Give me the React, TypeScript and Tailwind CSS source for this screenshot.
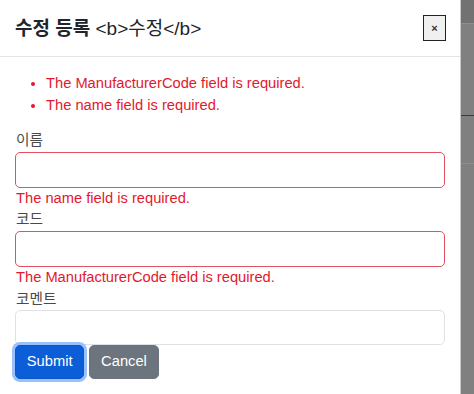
import React from "react";

const font = "font-['Liberation_Sans','Noto_Sans_CJK_KR',Arial,sans-serif]";

export default function App() {
  return (
    <div className={`flex h-[394px] w-[474px] overflow-hidden bg-[#808080] ${font} text-[#212529]`}>
      <div className="flex w-[461px] shrink-0 flex-col border-r border-[#c9c9c9] bg-white">
        <div className="flex h-[57px] shrink-0 items-center justify-between border-b border-[#e3e6e9] pl-[15px] pr-[14px]">
          <div className="text-[19px] leading-[27px]">
            <span className="font-bold">수정 등록</span> {"<b>수정</b>"}
          </div>
          <button className="flex h-[26px] w-[23px] items-center justify-center border border-[#222] bg-[#f0f0f0] text-[11px] font-bold leading-none text-[#333]">
            ×
          </button>
        </div>
        <div className="flex flex-col px-[15px] pt-[16px] text-[14.7px] leading-[21.6px]">
          <ul className="mb-[14px] list-disc pl-[31px] text-[#e3182e]">
            <li>The ManufacturerCode field is required.</li>
            <li>The name field is required.</li>
          </ul>
          <label className="pl-[1px] text-[#4a4a4a]">이름</label>
          <div className="h-[36px] rounded-[5px] border border-[#e0505e] bg-white" />
          <div className="pl-[1px] text-[#e3182e]">The name field is required.</div>
          <label className="pl-[1px] text-[#4a4a4a]">코드</label>
          <div className="h-[36px] rounded-[5px] border border-[#e0505e] bg-white" />
          <div className="pl-[1px] text-[#e3182e]">The ManufacturerCode field is required.</div>
          <label className="pl-[1px] text-[#4a4a4a]">코멘트</label>
          <div className="h-[35px] rounded-[5px] border border-[#dee2e6] bg-white" />
          <div className="flex items-start gap-[5px]">
            <button className="h-[34px] rounded-[5px] border border-[#0a58ca] bg-[#0b5ed7] px-[10.8px] text-[14.7px] text-white shadow-[0_0_0_3px_#98c1fe]">
              Submit
            </button>
            <button className="h-[34px] rounded-[5px] border border-[#6c757d] bg-[#6c757d] px-[10.8px] text-[14.7px] text-white">
              Cancel
            </button>
          </div>
        </div>
      </div>
      <div className="flex flex-1 flex-col">
        <div className="h-[23px] bg-[#727272]" />
        <div className="h-[1px] bg-[#8e8e8e]" />
        <div className="h-[91px]" />
        <div className="h-[1px] bg-[#3a3a3a]" />
        <div className="h-[47px]" />
        <div className="h-[1px] bg-[#8c8c8c]" />
        <div className="flex-1" />
      </div>
    </div>
  );
}
